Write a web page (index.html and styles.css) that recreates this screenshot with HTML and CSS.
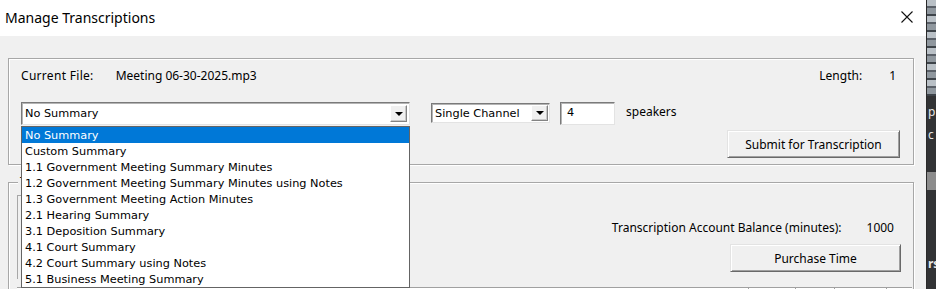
FILE: index.html
```html
<!DOCTYPE html>
<html>
<head>
<meta charset="utf-8">
<link rel="stylesheet" href="styles.css">
</head>
<body>
<div class="screen">
  <div class="dialog">
    <div class="titlebar">
      <span class="title">Manage Transcriptions</span>
      <svg class="close" width="12" height="12" viewBox="0 0 12 12"><path d="M0.5 0.5 L11.5 11.5 M11.5 0.5 L0.5 11.5" stroke="#111" stroke-width="1.1" fill="none"/></svg>
    </div>
    <div class="body">
      <div class="group g1">
        <div class="row1">
          <div class="pair"><span class="lbl">Current File:</span><span class="val file">Meeting 06-30-2025.mp3</span></div>
          <div class="pair right"><span class="lbl">Length:</span><span class="val len">1</span></div>
        </div>
        <div class="row2">
          <div class="combo-wrap">
            <div class="combo big"><span class="ctext">No Summary</span><span class="arrow"><i></i></span></div>
            <ul class="droplist">
              <li class="sel">No Summary</li>
              <li>Custom Summary</li>
              <li>1.1 Government Meeting Summary Minutes</li>
              <li>1.2 Government Meeting Summary Minutes using Notes</li>
              <li>1.3 Government Meeting Action Minutes</li>
              <li>2.1 Hearing Summary</li>
              <li>3.1 Deposition Summary</li>
              <li>4.1 Court Summary</li>
              <li>4.2 Court Summary using Notes</li>
              <li>5.1 Business Meeting Summary</li>
            </ul>
          </div>
          <div class="combo small"><span class="ctext">Single Channel</span><span class="arrow"><i></i></span></div>
          <div class="textbox">4</div>
          <span class="lbl speakers">speakers</span>
        </div>
        <div class="row3">
          <button class="btn submit">Submit for Transcription</button>
        </div>
      </div>
      <div class="group g2">
        <span class="legend">T</span>
        <div class="g2top">
          <div class="subbox"></div>
          <div class="balcol">
            <div class="balance"><span class="lbl">Transcription Account Balance (minutes):</span><span class="val">1000</span></div>
            <button class="btn purchase">Purchase Time</button>
          </div>
        </div>
        <div class="thead">
          <div class="th c1">Recording Name</div>
          <div class="th c2">Dialog</div>
          <div class="th c3">Date</div>
          <div class="th c4">Minutes</div>
          <div class="th c5"></div>
        </div>
      </div>
    </div>
  </div>
  <div class="desktop">
    <span class="dt p">p</span>
    <span class="dt c">c</span>
    <span class="dt rs">rs</span>
  </div>
</div>
</body>
</html>
```

FILE: styles.css
```css
* { box-sizing: border-box; }
html, body { margin: 0; padding: 0; }
body { background: #f0f0f0; }

.screen {
  width: 936px;
  height: 289px;
  overflow: hidden;
  display: flex;
  font-family: "Segoe UI", "Noto Sans", "Open Sans", sans-serif;
  font-size: 12px;
  color: #000;
}

.dialog {
  width: 926px;
  flex: none;
  display: flex;
  flex-direction: column;
  background: #f0f0f0;
}

.titlebar {
  height: 36px;
  flex: none;
  background: #fff;
  display: flex;
  align-items: center;
  justify-content: space-between;
  padding: 0 13px 2px 5px;
}
.title {
  font-size: 14px;
  color: #000;
}
.close { display: block; }

.body {
  padding: 22px 12px 0 8px;
}

.group {
  position: relative;
  border: 1px solid #a7a7a7;
  box-shadow: inset 1px 1px 0 #fff, 1px 1px 0 #fff;
}

.g1 {
  height: 107px;
  padding: 9px 13px 0 12px;
}

.row1 {
  display: flex;
  justify-content: space-between;
  line-height: 16px;
  height: 16px;
}
.pair { display: flex; }
.pair .lbl { letter-spacing: 0.3px; }
.pair .file { margin-left: 22px; }
.pair.right { padding-right: 4px; }
.pair.right .lbl { letter-spacing: 0; }
.pair .len { margin-left: 27px; }

.row2 {
  margin-top: 18px;
  display: flex;
  align-items: flex-start;
}

.combo-wrap {
  position: relative;
  width: 389px;
  flex: none;
}

.combo {
  position: relative;
  background: #fff;
  border: 1px solid;
  border-color: #7a7a7a #e3e3e3 #e3e3e3 #7a7a7a;
  box-shadow: inset 1px 1px 0 #b4b4b4;
  display: flex;
  align-items: center;
  font-family: "DejaVu Sans", "Verdana", sans-serif;
  font-size: 11.3px;
}
.combo.big { height: 23px; }
.combo.small {
  width: 119px;
  height: 20px;
  margin-left: 21px;
  margin-top: 1px;
}
.ctext { padding-left: 3px; flex: 1; white-space: nowrap; }
.arrow {
  width: 17px;
  height: 17px;
  margin-right: 2px;
  background: #f0f0f0;
  border: 1px solid;
  border-color: #fff #838383 #838383 #fff;
  box-shadow: inset -1px -1px 0 #c8c8c8;
  display: flex;
  align-items: center;
  justify-content: center;
}
.combo.small .arrow { height: 16px; margin-right: 1px; }
.arrow i {
  display: block;
  width: 0;
  height: 0;
  border-left: 4px solid transparent;
  border-right: 4px solid transparent;
  border-top: 4px solid #000;
}

.droplist {
  position: absolute;
  left: 0;
  top: 24px;
  width: 389px;
  height: 162px;
  margin: 0;
  padding: 0;
  list-style: none;
  background: #fff;
  border: 1px solid #646464;
  z-index: 10;
  font-family: "DejaVu Sans", "Verdana", sans-serif;
  font-size: 11.3px;
}
.droplist li {
  height: 16px;
  line-height: 18px;
  padding-left: 3px;
  white-space: nowrap;
}
.droplist li.sel {
  background: #0078d7;
  color: #fff;
}

.textbox {
  width: 55px;
  height: 23px;
  margin-left: 10px;
  background: #fff;
  border: 1px solid;
  border-color: #7a7a7a #e3e3e3 #e3e3e3 #7a7a7a;
  box-shadow: inset 1px 1px 0 #b4b4b4;
  font-family: "DejaVu Sans", "Verdana", sans-serif;
  font-size: 11.3px;
  line-height: 19px;
  padding-left: 6px;
}
.speakers {
  margin-left: 11px;
  margin-top: 2px;
  line-height: 16px;
}

.row3 {
  display: flex;
  justify-content: flex-end;
  margin-top: 5px;
}

.btn {
  font-family: inherit;
  font-size: 12px;
  color: #000;
  height: 28px;
  background: #f0f0f0;
  border: 1px solid;
  border-color: #e3e3e3 #696969 #696969 #e3e3e3;
  box-shadow: inset 1px 1px 0 #fff, inset -1px -1px 0 #a0a0a0;
  padding: 0;
  margin: 0;
}
.btn.submit { width: 173px; }

.g2 {
  margin-top: 17px;
  height: 130px;
  padding: 0 13px 0 8px;
}
.legend {
  position: absolute;
  left: 9px;
  top: -9px;
  padding: 0 2px;
  line-height: 16px;
  background: #f0f0f0;
}

.g2top {
  display: flex;
  justify-content: space-between;
}
.subbox {
  margin-top: 12px;
  width: 380px;
  height: 84px;
  border-left: 1px solid #a7a7a7;
  border-top: 1px solid #a7a7a7;
}
.balcol {
  display: flex;
  flex-direction: column;
  align-items: flex-end;
}
.balance {
  padding-top: 37px;
  padding-right: 6px;
  line-height: 16px;
  display: flex;
}
.balance .val { margin-left: 25px; }
.btn.purchase {
  width: 171px;
  margin-top: 8px;
  margin-right: -1px;
}

.thead {
  margin-top: 8px;
  margin-right: -12px;
  height: 24px;
  display: flex;
  background: #fff;
  border-top: 1px solid #a0a0a0;
}
.th {
  border-right: 1px solid #a0a0a0;
  padding: 4px 0 0 6px;
  line-height: 16px;
  white-space: nowrap;
  overflow: hidden;
}
.th.c1 { width: 732px; }
.th.c2 { width: 47px; }
.th.c3 { width: 39px; }
.th.c4 { width: 52px; }
.th.c5 { flex: 1; border-right: none; }

.desktop {
  flex: 1;
  display: flex;
  flex-direction: column;
  background:
    repeating-linear-gradient(180deg, #b9c0c6 0 6px, #5a6068 6px 8px, #8f979e 8px 14px, #3e444a 14px 16px) top / 100% 96px no-repeat,
    linear-gradient(180deg, transparent 0 172px, #8c8c8c 172px 190px, transparent 190px),
    #323335;
  border-left: 1px solid #2a2a2a;
  color: #e6e6e6;
  font-size: 12px;
  line-height: 16px;
  padding-left: 1px;
}
.dt.p { margin-top: 104px; }
.dt.c { margin-top: 7px; }
.dt.rs { margin-top: 113px; font-weight: bold; }
```
